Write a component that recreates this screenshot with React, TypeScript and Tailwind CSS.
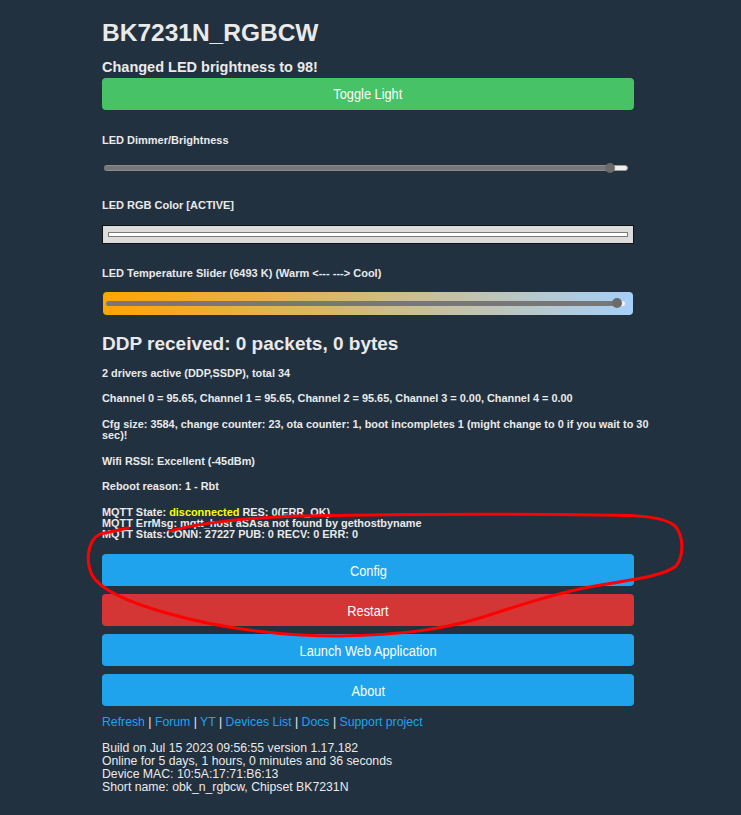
import React from "react";

const sans = "font-['Liberation_Sans',Arial,sans-serif]";

function Btn({ label, color }: { label: string; color: string }) {
  return (
    <div
      className={`flex h-[32px] w-full items-center justify-center rounded-[4px] ${color} text-[15.5px] text-white`}
    >
      {/* narrow face is not installed, so squeeze the regular one */}
      <span className="inline-block scale-x-[0.825] whitespace-nowrap">{label}</span>
    </div>
  );
}

function Label({ children, className = "" }: { children: React.ReactNode; className?: string }) {
  return <div className={`text-[11px] font-bold leading-[13px] ${className}`}>{children}</div>;
}

function DimmerSlider() {
  return (
    <div className="mt-[11.4px] flex h-[20px] items-center">
      <div className="relative ml-[2px] flex h-[6px] w-[524px]">
        <div className="flex-1 rounded-l-full border-y border-[#8a8a8a] bg-[#777777]" />
        <div className="w-[17px] rounded-r-full border border-[#9a9a9a] bg-[#efefef]" />
        <div className="absolute left-[501px] top-[-2px] h-[10px] w-[10px] rounded-full bg-[#6b6b6b]" />
      </div>
    </div>
  );
}

function ColorBox() {
  return (
    <div className="mt-[12.7px] flex h-[19px] items-center border border-[#111] bg-[#dcdcdc] px-[5px]">
      <div className="h-[5px] w-full border border-[#7a7a7a] bg-white" />
    </div>
  );
}

function TempSlider() {
  return (
    <div className="ml-[1px] mt-[12.4px] flex h-[23px] w-[530px] items-center rounded-[4px] bg-linear-to-r/srgb from-[#ffa500] to-[#a6d0fa] pl-[3px]">
      <div className="relative flex h-[5px] w-[519px]">
        <div className="flex-1 rounded-l-full bg-[#777777]" />
        <div className="w-[8px] rounded-r-full bg-[#f2f2f2]" />
        <div className="absolute left-[506px] top-[-2.5px] h-[10px] w-[10px] rounded-full bg-[#6b6b6b]" />
      </div>
    </div>
  );
}

// hand-drawn red loop from the screenshot, sits over the page
function RedCircle() {
  return (
    <svg
      className="pointer-events-none absolute left-0 top-0"
      width="741"
      height="815"
      viewBox="0 0 741 815"
      fill="none"
    >
      <path
        d="M 170 531 C 200 523, 240 518, 300 516 C 400 514, 520 514, 600 515 C 640 515, 665 517, 675 526 C 684 536, 684 556, 676 566 C 664 576, 630 580, 595 586 C 560 592, 520 605, 480 618 C 440 630, 400 635, 340 636 C 280 636, 220 628, 170 614 C 130 603, 100 590, 92 575 C 85 560, 88 540, 100 534 L 128 528"
        stroke="#ff0000"
        strokeWidth="3"
        strokeLinecap="round"
        strokeLinejoin="round"
      />
    </svg>
  );
}

export default function App() {
  return (
    <div className={`relative min-h-screen bg-[#223140] pl-[102px] text-[#eaeaea] ${sans}`}>
      <div className="flex w-[532px] flex-col pt-[19px] pb-[20px]">
        <h1 className="text-[24.5px] font-bold leading-[28px]">BK7231N_RGBCW</h1>
        <div className="mt-[11.5px] text-[14.5px] font-bold leading-[17px]">
          Changed LED brightness to 98!
        </div>
        <div className="mt-[2.5px]">
          <Btn label="Toggle Light" color="bg-[#47c266]" />
        </div>

        <Label className="mt-[23.6px]">LED Dimmer/Brightness</Label>
        <DimmerSlider />

        <Label className="mt-[21.3px]">LED RGB Color [ACTIVE]</Label>
        <ColorBox />

        <Label className="mt-[22.6px]">LED Temperature Slider (6493 K) (Warm &lt;--- ---&gt; Cool)</Label>
        <TempSlider />

        <h3 className="mt-[17.7px] text-[19px] font-bold leading-[22px]">
          DDP received: 0 packets, 0 bytes
        </h3>

        <div className="mt-[12.9px] flex flex-col gap-[14.7px] text-[10.9px] font-bold leading-[11px]">
          <p>2 drivers active (DDP,SSDP), total 34</p>
          <p>Channel 0 = 95.65, Channel 1 = 95.65, Channel 2 = 95.65, Channel 3 = 0.00, Channel 4 = 0.00</p>
          <p>
            <span className="whitespace-nowrap">
              Cfg size: 3584, change counter: 23, ota counter: 1, boot incompletes 1 (might change to 0 if you wait to 30
            </span>
            <br />
            sec)!
          </p>
          <p>Wifi RSSI: Excellent (-45dBm)</p>
          <p>Reboot reason: 1 - Rbt</p>
          <p>
            MQTT State: <span className="text-[#ffff00]">disconnected</span> RES: 0(ERR_OK)
            <br />
            MQTT ErrMsg: mqtt_host aSAsa not found by gethostbyname
            <br />
            MQTT Stats:CONN: 27227 PUB: 0 RECV: 0 ERR: 0
          </p>
        </div>

        <div className="mt-[14.4px] flex flex-col gap-[8px]">
          <Btn label="Config" color="bg-[#1fa3ec]" />
          <Btn label="Restart" color="bg-[#d43535]" />
          <Btn label="Launch Web Application" color="bg-[#1fa3ec]" />
          <Btn label="About" color="bg-[#1fa3ec]" />
        </div>

        <div className="mt-[8.2px] text-[12.25px] leading-[14px]">
          <a className="text-[#1fa3ec]">Refresh</a> | <a className="text-[#1fa3ec]">Forum</a> |{" "}
          <a className="text-[#1fa3ec]">YT</a> | <a className="text-[#1fa3ec]">Devices List</a> |{" "}
          <a className="text-[#1fa3ec]">Docs</a> | <a className="text-[#1fa3ec]">Support project</a>
        </div>

        <div className="mt-[13.1px] text-[12.25px] leading-[13px]">
          <div>Build on Jul 15 2023 09:56:55 version 1.17.182</div>
          <div>Online for 5 days, 1 hours, 0 minutes and 36 seconds</div>
          <div>Device MAC: 10:5A:17:71:B6:13</div>
          <div>Short name: obk_n_rgbcw, Chipset BK7231N</div>
        </div>
      </div>
      <RedCircle />
    </div>
  );
}
